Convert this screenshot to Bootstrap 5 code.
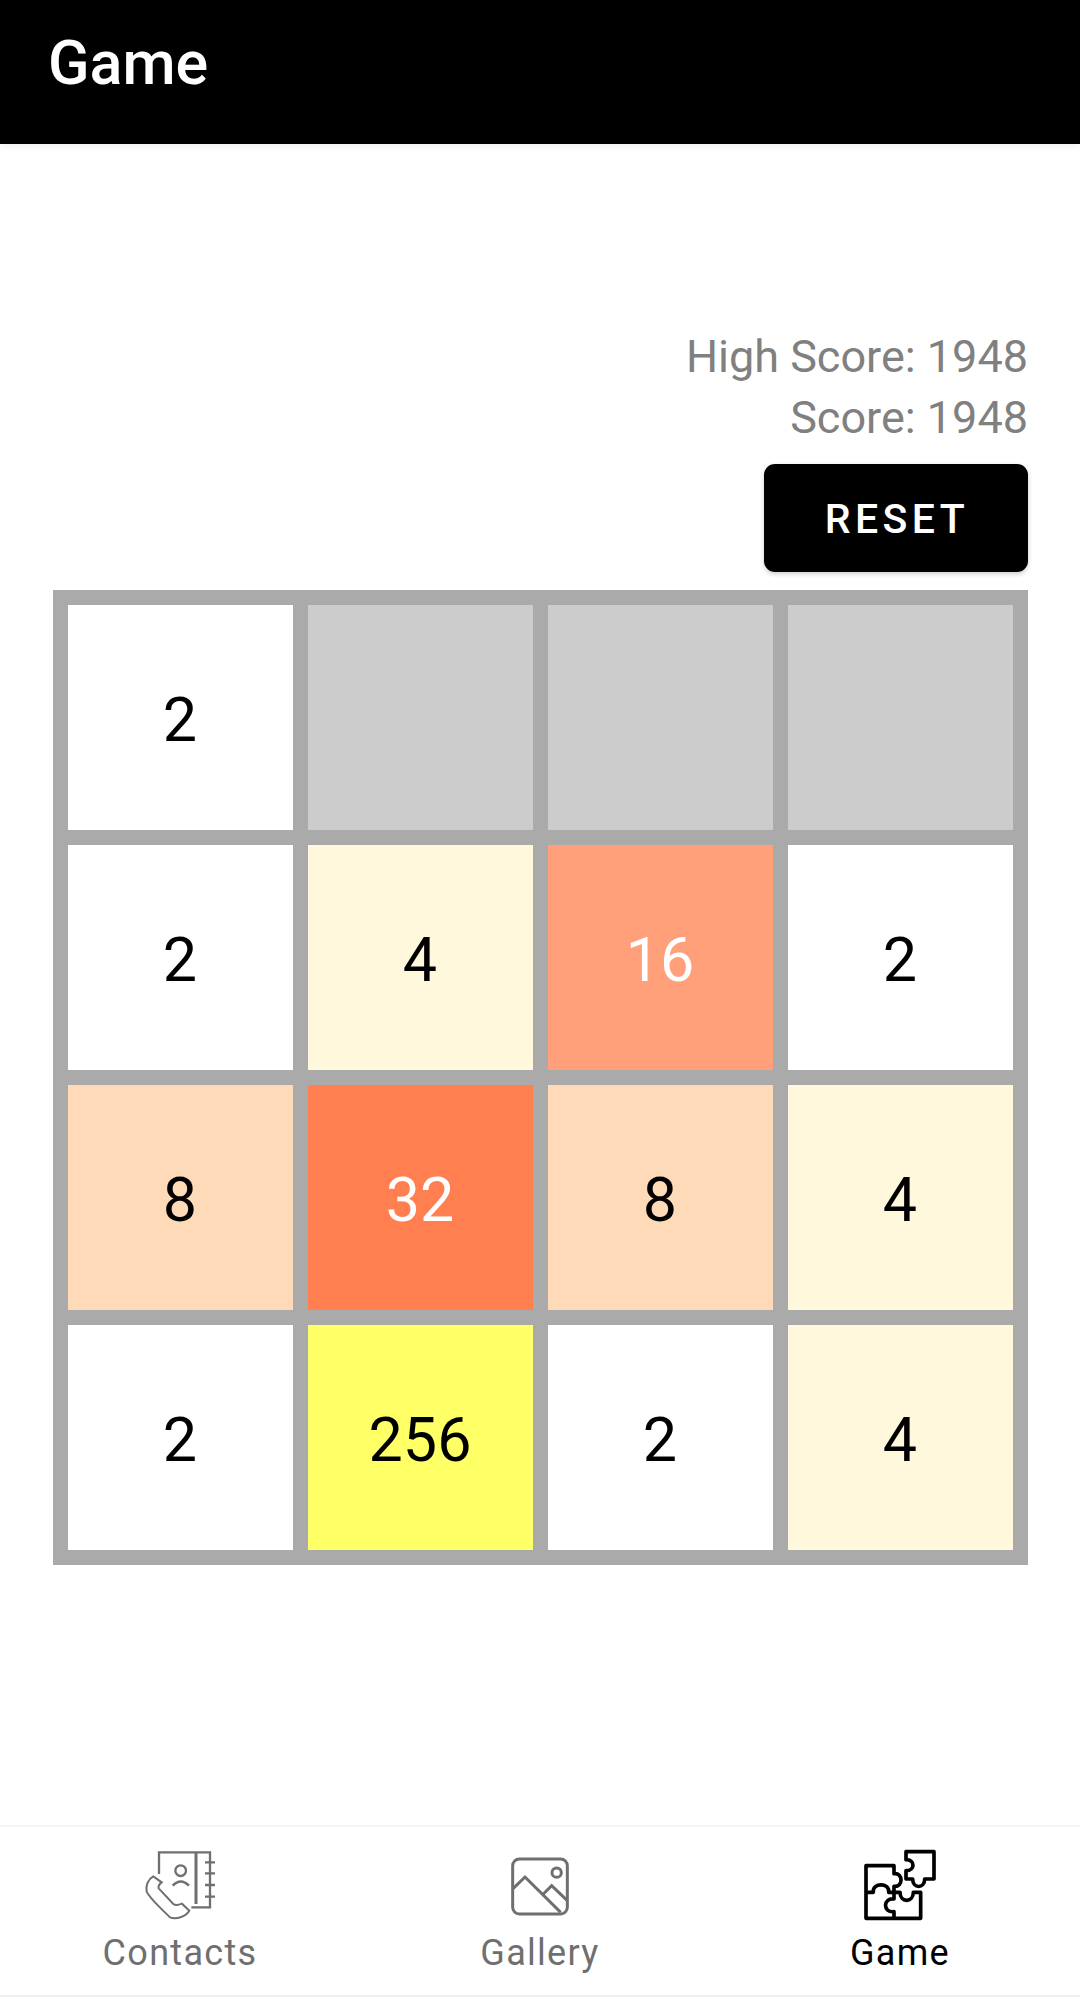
<!DOCTYPE html>
<html lang="en">
<head>
<meta charset="utf-8">
<title>Game</title>
<link href="https://cdn.jsdelivr.net/npm/bootstrap@5.3.0/dist/css/bootstrap.min.css" rel="stylesheet">
<style>
html, body { margin: 0; height: 1997px; }
body { font-family: Roboto, "Liberation Sans", sans-serif; background: #fff; width: 1080px; overflow: hidden; }
.app-shell { height: 1997px; }
.top-bar { height: 144px; background: #000; padding: 0 0 0 48px; box-shadow: 0 2px 8px rgba(0,0,0,.08); z-index: 2; position: relative; }
.top-title { font-size: 61px; font-weight: 500; color: #fff; line-height: 1; margin: -18px 0 0; }
.play-area { padding: 182px 52px 0 53px; }
.score-line { font-size: 45px; line-height: 61px; color: #808080; text-align: right; }
.reset-btn { width: 264px; height: 108px; margin-top: 16px; border-radius: 11px; background: #000; color: #fff; border: 0; font-size: 41px; font-weight: 500; letter-spacing: 4.4px; padding: 3px 0 0 2px; box-shadow: 0 2px 5px rgba(0,0,0,.2); }
.reset-btn:hover { background: #000; color: #fff; }
.board { display: grid; grid-template-columns: repeat(4, 225px); grid-auto-rows: 225px; gap: 15px; padding: 15px; background: #aaa; margin-top: 18px; width: 975px; }
.tile { font-size: 61px; color: #000; line-height: 1; padding: 5px 1px 0 0; }
.t0 { background: #ccc; }
.t2 { background: #fff; }
.t4 { background: #fff8dc; }
.t8 { background: #ffdab9; }
.t16 { background: #ffa07a; color: #fff; }
.t32 { background: #ff7f50; color: #fff; }
.t256 { background: #ffff66; }
.bottom-bar { height: 172px; border-top: 2px solid #f5f5f5; border-bottom: 2px solid #f0f0f0; }
.tab-item { width: 360px; color: #6f6f6f; padding-top: 18px; }
.tab-item.on { color: #000; }
.tab-item svg { width: 84px; height: 84px; display: block; }
.tab-label { font-size: 36px; line-height: 42px; letter-spacing: 1.3px; margin-top: 3px; }
</style>
</head>
<body>
<div class="app-shell d-flex flex-column">
  <nav class="top-bar d-flex align-items-center">
    <h1 class="top-title">Game</h1>
  </nav>
  <main class="play-area flex-grow-1">
    <div class="score-line">High Score: 1948</div>
    <div class="score-line">Score: 1948</div>
    <div class="d-flex justify-content-end">
      <button type="button" class="btn reset-btn">RESET</button>
    </div>
    <div class="board">
      <div class="tile t2 d-flex align-items-center justify-content-center">2</div>
      <div class="tile t0"></div>
      <div class="tile t0"></div>
      <div class="tile t0"></div>
      <div class="tile t2 d-flex align-items-center justify-content-center">2</div>
      <div class="tile t4 d-flex align-items-center justify-content-center">4</div>
      <div class="tile t16 d-flex align-items-center justify-content-center">16</div>
      <div class="tile t2 d-flex align-items-center justify-content-center">2</div>
      <div class="tile t8 d-flex align-items-center justify-content-center">8</div>
      <div class="tile t32 d-flex align-items-center justify-content-center">32</div>
      <div class="tile t8 d-flex align-items-center justify-content-center">8</div>
      <div class="tile t4 d-flex align-items-center justify-content-center">4</div>
      <div class="tile t2 d-flex align-items-center justify-content-center">2</div>
      <div class="tile t256 d-flex align-items-center justify-content-center">256</div>
      <div class="tile t2 d-flex align-items-center justify-content-center">2</div>
      <div class="tile t4 d-flex align-items-center justify-content-center">4</div>
    </div>
  </main>
  <nav class="bottom-bar d-flex">
    <div class="tab-item d-flex flex-column align-items-center">
      <svg viewBox="54 48 252 252" fill="none" stroke="currentColor" stroke-width="7" aria-hidden="true">
        <path d="M117 135V70H270V235H214"/>
        <path d="M228 72V225" stroke-width="9"/>
        <path d="M255 100H285M255 133H285M255 168H285M255 203H285"/>
        <circle cx="182" cy="125" r="16"/>
        <path d="M158 170Q182 145 207 170"/>
        <path d="M100 142C85 150 76 170 80 188C92 212 130 245 150 265C168 272 196 264 208 245L186 224C176 228 166 230 160 225L116 178C114 170 118 165 125 160Z" stroke-width="6"/>
      </svg>
      <div class="tab-label">Contacts</div>
    </div>
    <div class="tab-item d-flex flex-column align-items-center">
      <svg viewBox="24 48 252 252" fill="none" stroke="currentColor" stroke-width="9" aria-hidden="true">
        <rect x="68" y="90" width="164" height="165" rx="20"/>
        <circle cx="200" cy="131" r="14"/>
        <path d="M70 178L105 144L212 250M160 195L185 170L232 215"/>
      </svg>
      <div class="tab-label">Gallery</div>
    </div>
    <div class="tab-item on d-flex flex-column align-items-center">
      <svg viewBox="24 48 252 252" fill="none" stroke="currentColor" stroke-width="11" stroke-linejoin="round" aria-hidden="true">
        <path d="M168 68H252V150H224C224 180 188 180 188 150H168V125C196 125 196 92 168 92Z"/>
        <path d="M48 110H132V134C160 130 160 176 132 172V190H150C150 222 190 222 190 190H212V268H48Z"/>
        <path d="M48 190H70C66 160 120 160 116 190H132V210C98 206 98 252 132 248V268"/>
      </svg>
      <div class="tab-label">Game</div>
    </div>
  </nav>
</div>
<script src="https://cdn.jsdelivr.net/npm/bootstrap@5.3.0/dist/js/bootstrap.bundle.min.js"></script>
</body>
</html>
